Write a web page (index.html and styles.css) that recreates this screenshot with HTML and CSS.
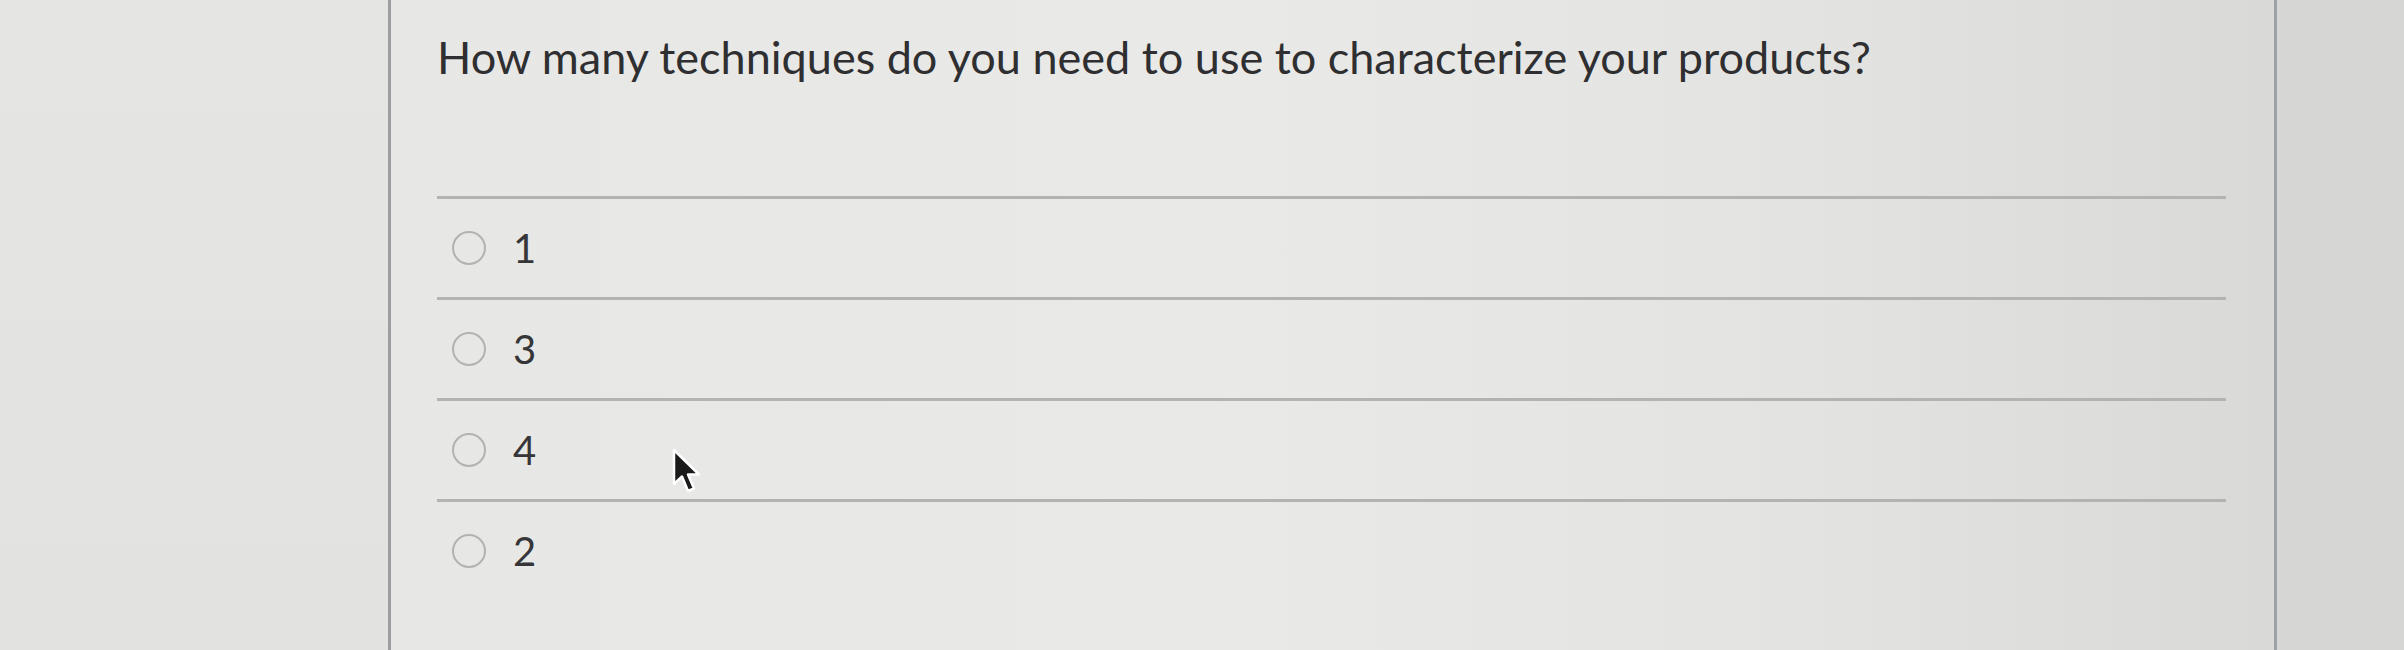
FILE: index.html
```html
<!DOCTYPE html>
<html lang="en">
<head>
<meta charset="utf-8">
<title>Quiz question</title>
<link rel="stylesheet" href="styles.css">
</head>
<body>
<div class="page">
  <aside class="side side-left"></aside>
  <main class="content">
    <h1 class="question">How many techniques do you need to use to characterize your products?</h1>
    <ul class="options">
      <li class="option"><span class="radio"></span><span class="label">1</span></li>
      <li class="option"><span class="radio"></span><span class="label">3</span></li>
      <li class="option"><span class="radio"></span><span class="label">4</span></li>
      <li class="option"><span class="radio"></span><span class="label">2</span></li>
    </ul>
    <svg class="cursor" width="30" height="46" viewBox="0 0 30 46" aria-hidden="true">
      <path d="M2 2 L2 36 L10 28.5 L16 43 L22 40.5 L16 26.5 L27 26.5 Z" fill="#1a1a1a" stroke="#ffffff" stroke-width="2.5" stroke-linejoin="round"/>
    </svg>
  </main>
  <aside class="side side-right"></aside>
</div>
</body>
</html>
```

FILE: styles.css
```css
html, body {
  margin: 0;
  padding: 0;
}

body {
  width: 2404px;
  height: 650px;
  overflow: hidden;
  font-family: Lato, "Open Sans", "Liberation Sans", sans-serif;
  background: #e3e3e1;
}

.page {
  display: flex;
  height: 650px;
}

.side-left {
  width: 388px;
  flex: none;
  background: linear-gradient(180deg, #e5e5e3 0%, #e2e3e1 100%);
  border-right: 3px solid #9c9da3;
}

.content {
  position: relative;
  width: 1883px;
  flex: none;
  padding: 0 48px 0 46px;
  box-sizing: border-box;
  background: linear-gradient(90deg, #e7e7e5 0%, #e9e9e7 45%, #e3e4e2 75%, #d9dad8 100%);
}

.side-right {
  flex: 1;
  border-left: 3px solid #9fa1a8;
  background: #d6d7d5;
}

.question {
  margin: 30px 0 0 0;
  font-size: 45px;
  line-height: 1.2;
  font-weight: 400;
  color: #2f2f31;
  white-space: nowrap;
}

.options {
  list-style: none;
  margin: 112px 0 0 0;
  padding: 0;
}

.option {
  display: flex;
  align-items: center;
  height: 101px;
  box-sizing: border-box;
  border-top: 3px solid #b3b3b3;
}

.radio {
  width: 34px;
  height: 34px;
  margin-left: 15px;
  border: 2.5px solid #b2b2b2;
  border-radius: 50%;
  box-sizing: border-box;
  flex: none;
}

.label {
  margin-left: 27px;
  font-size: 40px;
  line-height: 1;
  color: #363638;
}

.cursor {
  position: absolute;
  left: 281px;
  top: 448px;
}
```
